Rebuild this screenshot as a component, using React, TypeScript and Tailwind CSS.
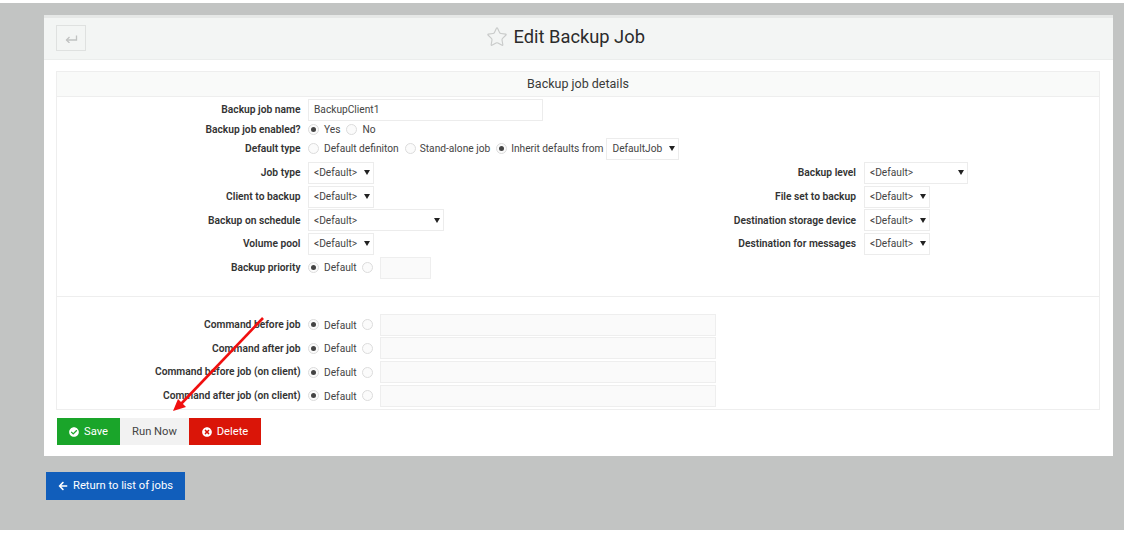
import { Star } from "lucide-react";
import { FaArrowLeft, FaCheckCircle, FaTimesCircle } from "react-icons/fa";

function Radio({ checked = false }: { checked?: boolean }) {
  return (
    <span className="flex h-[11px] w-[11px] shrink-0 items-center justify-center rounded-full border border-[#dcdcdc] bg-[#fbfbfb]">
      {checked && <span className="h-[5px] w-[5px] rounded-full bg-[#444]" />}
    </span>
  );
}

function Select({ value = "<Default>", width = "w-[66px]" }: { value?: string; width?: string }) {
  return (
    <div className={`flex h-[22px] shrink-0 items-center justify-between border border-[#ececec] bg-white pl-[5px] pr-[3px] text-[10.2px] text-[#444] ${width}`}>
      <span>{value}</span>
      <span className="h-0 w-0 border-x-[3px] border-t-[5px] border-x-transparent border-t-[#222]" />
    </div>
  );
}

function Label({ children }: { children: string }) {
  return <div className="w-[243.5px] shrink-0 text-right text-[10.25px] font-semibold text-[#333]">{children}</div>;
}

function Row({ label, children, className = "h-[23.7px]" }: { label: string; children: React.ReactNode; className?: string }) {
  return (
    <div className={`flex items-center gap-[7.5px] ${className}`}>
      <Label>{label}</Label>
      <div className="flex items-center">{children}</div>
    </div>
  );
}

function RightRow({ label, width }: { label: string; width?: string }) {
  return (
    <div className="flex h-[23.7px] items-center justify-end gap-2">
      <div className="text-right text-[10.25px] font-semibold text-[#333]">{label}</div>
      <div className="w-[235px] shrink-0">
        <Select width={width} />
      </div>
    </div>
  );
}

function DefaultRadios() {
  return (
    <div className="flex items-center text-[10.2px] text-[#444]">
      <Radio checked />
      <span className="ml-[5px] mr-[5px] pt-[1px]">Default</span>
      <Radio />
    </div>
  );
}

function FieldBox({ width }: { width: string }) {
  return <div className={`ml-[7px] h-[22px] border border-[#eeeeee] bg-[#fafafa] ${width}`} />;
}

function CommandRow({ label }: { label: string }) {
  return (
    <Row label={label}>
      <DefaultRadios />
      <FieldBox width="w-[336px]" />
    </Row>
  );
}

export default function App() {
  return (
    <div className="h-[536px] w-[1128px] overflow-hidden bg-white pr-[4px] pt-[3px] pb-[6px] font-['Roboto',sans-serif]">
      <div className="relative h-full bg-[#c2c4c3] pl-[44px] pt-[12px]">
        <div className="h-[441px] w-[1068.5px] border-t-[3px] border-[#e6e8e7] bg-white">
          <div className="relative flex h-[42px] items-center justify-center border-b border-[#ebedec] bg-[#f3f5f4] pb-[3px] pr-[26px]">
            <button className="absolute left-[12px] top-[7px] flex h-[26px] w-[30px] items-center justify-center border border-[#dfe1e0]">
              <svg width="13" height="9" viewBox="0 0 13 9" fill="none" stroke="#c0c2c1" strokeWidth="1.3">
                <path d="M1.5 6 H11.5 V1.5" />
                <path d="M4.5 3 L1.5 6 L4.5 9" />
              </svg>
            </button>
            <Star className="mr-[6px] h-[22px] w-[22px] text-[#c9cbca]" strokeWidth={1.25} />
            <h1 className="text-[18.3px] text-[#2b2b2b]">Edit Backup Job</h1>
          </div>

          <div className="ml-[12px] mt-[11px] h-[339px] w-[1044px] border border-[#eeeeee]">
            <div className="flex h-[25px] items-center justify-center border-b border-[#eeeeee] bg-[#f9faf9] text-[12.5px] text-[#3a3a3a]">
              Backup job details
            </div>
            <div className="pt-[1px]">
              <Row label="Backup job name" className="h-[23px]">
                <div className="flex h-[22px] w-[235px] items-center border border-[#ececec] bg-white pl-[5px] text-[10.2px] text-[#444]">
                  BackupClient1
                </div>
              </Row>
              <Row label="Backup job enabled?" className="h-[17px]">
                <div className="flex items-center text-[10.2px] text-[#444]">
                  <Radio checked />
                  <span className="ml-[5px] mr-[6px]">Yes</span>
                  <Radio />
                  <span className="ml-[5px]">No</span>
                </div>
              </Row>
              <Row label="Default type" className="h-[21px]">
                <div className="flex items-center text-[10.2px] text-[#444]">
                  <Radio />
                  <span className="ml-[5px] mr-[6px]">Default definiton</span>
                  <Radio />
                  <span className="ml-[4px] mr-[6px]">Stand-alone job</span>
                  <Radio checked />
                  <span className="ml-[4px] mr-[3px]">Inherit defaults from</span>
                  <Select value="DefaultJob" width="w-[73px]" />
                </div>
              </Row>
              <div className="flex pt-[2px]">
                <div className="w-[560px]">
                  <Row label="Job type"><Select /></Row>
                  <Row label="Client to backup"><Select /></Row>
                  <Row label="Backup on schedule"><Select width="w-[136px]" /></Row>
                  <Row label="Volume pool"><Select /></Row>
                  <Row label="Backup priority">
                    <DefaultRadios />
                    <FieldBox width="w-[51px]" />
                  </Row>
                </div>
                <div className="flex-1">
                  <RightRow label="Backup level" width="w-[104px]" />
                  <RightRow label="File set to backup" />
                  <RightRow label="Destination storage device" />
                  <RightRow label="Destination for messages" />
                </div>
              </div>
              <div className="mt-[16.5px] border-t border-[#eeeeee] pt-[16px]">
                <CommandRow label="Command before job" />
                <CommandRow label="Command after job" />
                <CommandRow label="Command before job (on client)" />
                <CommandRow label="Command after job (on client)" />
              </div>
            </div>
          </div>

          <div className="ml-[13px] mt-[8px] flex h-[27px] text-[11.2px]">
            <button className="flex w-[63px] items-center justify-center gap-[5px] bg-[#1aa52a] pt-[1px] text-white">
              <FaCheckCircle className="h-[10px] w-[10px]" />
              Save
            </button>
            <button className="flex w-[69px] items-center justify-center bg-[#f2f2f2] pt-[1px] text-[#444]">Run Now</button>
            <button className="flex w-[72px] items-center justify-center gap-[5px] bg-[#da1508] pt-[1px] text-white">
              <FaTimesCircle className="h-[10px] w-[10px]" />
              Delete
            </button>
          </div>
        </div>

        <button className="ml-[2px] mt-[16px] flex h-[28px] w-[139px] items-center justify-center gap-[5px] bg-[#115ebb] text-[11.2px] text-white">
          <FaArrowLeft className="h-[10px] w-[10px]" />
          Return to list of jobs
        </button>

        <svg className="absolute left-[165px] top-[312px]" width="105" height="105" viewBox="0 0 105 105">
          <path d="M98 3 L15 90" stroke="#f00f0f" strokeWidth="2.6" fill="none" />
          <path d="M8 96 L13 84 L21 92 Z" fill="#f00f0f" />
        </svg>
      </div>
    </div>
  );
}
